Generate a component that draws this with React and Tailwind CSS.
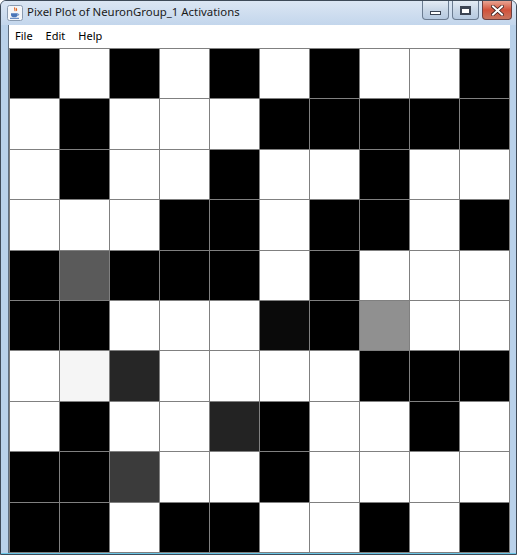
import React from 'react';

const K = '#000000';
const W = '#ffffff';

// activation values per cell, row by row
const cells = [
    [K, W, K, W, K, W, K, W, W, K],
    [W, K, W, W, W, K, K, K, K, K],
    [W, K, W, W, K, W, W, K, W, W],
    [W, W, W, K, K, W, K, K, W, K],
    [K, '#5a5a5a', K, K, K, W, K, W, W, W],
    [K, K, W, W, W, '#0a0a0a', K, '#909090', W, W],
    [W, '#f5f5f5', '#262626', W, W, W, W, K, K, K],
    [W, K, W, W, '#232323', K, W, W, K, W],
    [K, K, '#3b3b3b', W, W, K, W, W, W, W],
    [K, K, W, K, K, W, W, K, W, K],
];

function JavaIcon() {
    return (
        <svg width="16" height="16" viewBox="0 0 16 16">
            <rect x="0.5" y="0.5" width="15" height="15" rx="2" fill="#f4f6f9" stroke="#8a9bb0" />
            <path d="M8 2.5c-1.5 1.2 1 2-.3 3.6M9.6 3.2c-1 .9.8 1.4-.2 2.6" stroke="#e2631c" strokeWidth="1.1" fill="none" />
            <path d="M4 8.2h6.5v1.8c0 1.4-1.2 2.3-3.2 2.3S4 11.4 4 10z" fill="#4a76b8" />
            <path d="M10.5 8.8c1.6-.2 1.6 1.8 0 1.6" stroke="#4a76b8" strokeWidth="0.9" fill="none" />
            <path d="M3 13.3h9" stroke="#4a76b8" strokeWidth="1" />
        </svg>
    );
}

function CaptionButton({ kind }) {
    if (kind === 'close') {
        return (
            <div className="w-[30px] h-[19px] rounded-b-[4px] border border-t-0 border-[#6d4040] bg-gradient-to-b from-[#e8a493] via-[#d1513a] to-[#c8745f] flex items-center justify-center">
                <svg width="13" height="11" viewBox="0 0 13 11">
                    <path d="M2 1.5l9 8M11 1.5l-9 8" stroke="#3a1f1f" strokeWidth="3.6" strokeLinecap="square" />
                    <path d="M2 1.5l9 8M11 1.5l-9 8" stroke="#ffffff" strokeWidth="2" strokeLinecap="square" />
                </svg>
            </div>
        );
    }
    return (
        <div className="w-[27px] h-[19px] rounded-b-[4px] border border-t-0 border-[#6b7c91] bg-gradient-to-b from-[#e4ecf5] via-[#c9d7e7] to-[#b5c9e0] flex items-center justify-center">
            {kind === 'min' ? (
                <div className="w-[11px] h-[4px] mt-[5px] bg-white border border-[#3b4453]" />
            ) : (
                <div className="w-[11px] h-[9px] border-[2px] border-t-[3px] border-[#3b4453] bg-white" />
            )}
        </div>
    );
}

export default function App() {
    return (
        <div
            className="w-[517px] h-[555px] overflow-hidden flex flex-col bg-[#b9d1ea] border-l border-r border-b border-t border-[#3e4a58] rounded-t-[6px]"
            style={{ fontFamily: '"Noto Sans", "Open Sans", sans-serif' }}
        >
            {/* Title bar */}
            <div className="h-[24px] shrink-0 flex items-start bg-gradient-to-b from-[#dbe6f3] to-[#c3d6ec]">
                <div className="pl-[6px] pt-[4px]">
                    <JavaIcon />
                </div>
                <span className="pl-[4px] pt-[3px] text-[11.4px] text-[#1a1a1a] leading-[16px]">
                    Pixel Plot of NeuronGroup_1 Activations
                </span>
                <div className="ml-auto mr-[4px] flex gap-[3px]">
                    <CaptionButton kind="min" />
                    <CaptionButton kind="max" />
                    <CaptionButton kind="close" />
                </div>
            </div>

            {/* Client area */}
            <div className="ml-[7px] w-[502px] flex flex-col border-l border-[#5f6e80]">
                <div className="h-[23px] bg-white flex items-center gap-[13px] pl-[6px] text-[11px] text-black">
                    <span>File</span>
                    <span>Edit</span>
                    <span>Help</span>
                </div>
                <div className="w-[501px] h-[505px] grid grid-cols-10 grid-rows-10 gap-px p-px bg-[#808080]">
                    {cells.flat().map((c, i) => (
                        <div key={i} style={{ backgroundColor: c }} />
                    ))}
                </div>
            </div>
            <div className="h-px bg-[#69c6e6]" />
        </div>
    );
}
